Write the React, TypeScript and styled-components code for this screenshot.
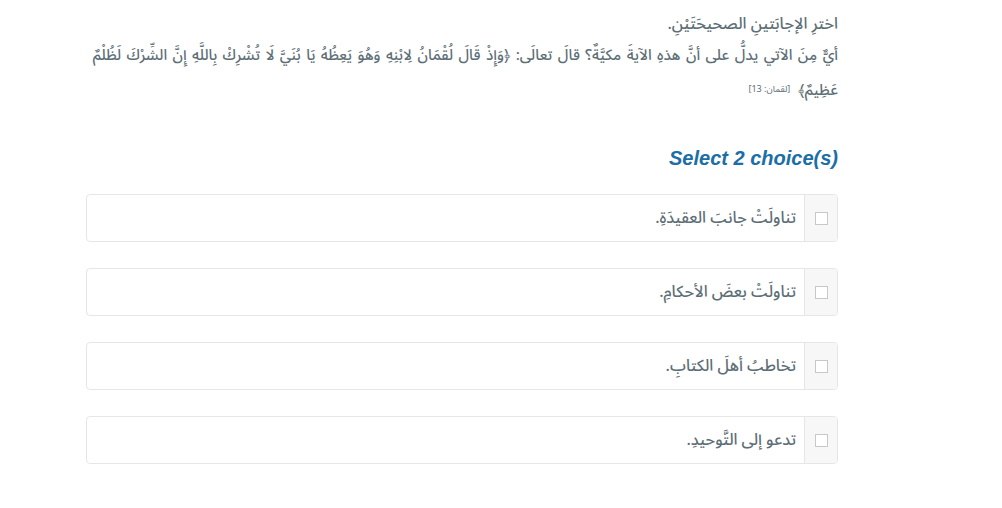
import React from "react";
import styled, { createGlobalStyle } from "styled-components";

const Global = createGlobalStyle`
  html, body { margin: 0; padding: 0; background: #ffffff; }
  body { font-family: "Noto Sans Arabic", "Noto Naskh Arabic", "DejaVu Sans", sans-serif; }
`;

const Page = styled.div`
  direction: rtl;
  width: 752px;
  margin-left: 86px;
  padding-top: 10px;
  color: #5d6e76;
`;

const Instruction = styled.p`
  margin: 0;
  font-size: 16px;
  line-height: 28px;
  font-weight: 500;
`;

const Verse = styled.p`
  margin: 0;
  font-size: 15px;
  line-height: 35px;
  font-weight: 500;
  word-spacing: 1.5px;
`;

const Ref = styled.span`
  display: inline-block;
  font-size: 9px;
  line-height: 10px;
  font-weight: normal;
  word-spacing: 0;
  margin-right: 8px;
  vertical-align: 3px;
`;

const Title = styled.h2`
  margin: 38px 0 24px 0;
  font-family: "Liberation Sans", Arial, sans-serif;
  font-style: italic;
  font-weight: bold;
  font-size: 20px;
  line-height: 24px;
  color: #1b6ea6;
`;

const Choices = styled.div`
  display: flex;
  flex-direction: column;
  gap: 26px;
`;

const Card = styled.label`
  display: flex;
  align-items: stretch;
  height: 48px;
  box-sizing: border-box;
  border: 1px solid #e6e6e6;
  border-radius: 4px;
  overflow: hidden;
  cursor: pointer;
`;

const BoxCell = styled.div`
  width: 32px;
  flex: 0 0 32px;
  background: #f7f7f7;
  border-left: 1px solid #e6e6e6;
  display: flex;
  align-items: center;
  justify-content: center;
`;

const Box = styled.span`
  width: 13px;
  height: 13px;
  box-sizing: border-box;
  border: 1px solid #c8c8c8;
  background: #ffffff;
`;

const ChoiceText = styled.span`
  display: flex;
  align-items: center;
  padding-right: 8px;
  font-size: 16px;
  font-weight: 500;
  color: #5d6e76;
`;

const choices = [
  "تناولَتْ جانبَ العقيدَةِ.",
  "تناولَتْ بعضَ الأحكامِ.",
  "تخاطبُ أهلَ الكتابِ.",
  "تدعو إلى التَّوحيدِ.",
];

export default function App() {
  return (
    <>
      <Global />
      <Page>
        <Instruction>اخترِ الإجابَتينِ الصحيحَتَيْنِ.</Instruction>
        <Verse>
          أيٌّ مِنَ الآتي يدلُّ على أنَّ هذهِ الآيةَ مكيَّةٌ؟ قالَ تعالَى: ﴿وَإِذْ قَالَ لُقْمَانُ لِابْنِهِ وَهُوَ يَعِظُهُ يَا بُنَيَّ لَا تُشْرِكْ بِاللَّهِ إِنَّ الشِّرْكَ لَظُلْمٌ عَظِيمٌ﴾
          <Ref>[لقمان: 13]</Ref>
        </Verse>
        <Title>Select 2 choice(s)</Title>
        <Choices>
          {choices.map((c) => (
            <Card key={c}>
              <BoxCell>
                <Box />
              </BoxCell>
              <ChoiceText>{c}</ChoiceText>
            </Card>
          ))}
        </Choices>
      </Page>
    </>
  );
}
